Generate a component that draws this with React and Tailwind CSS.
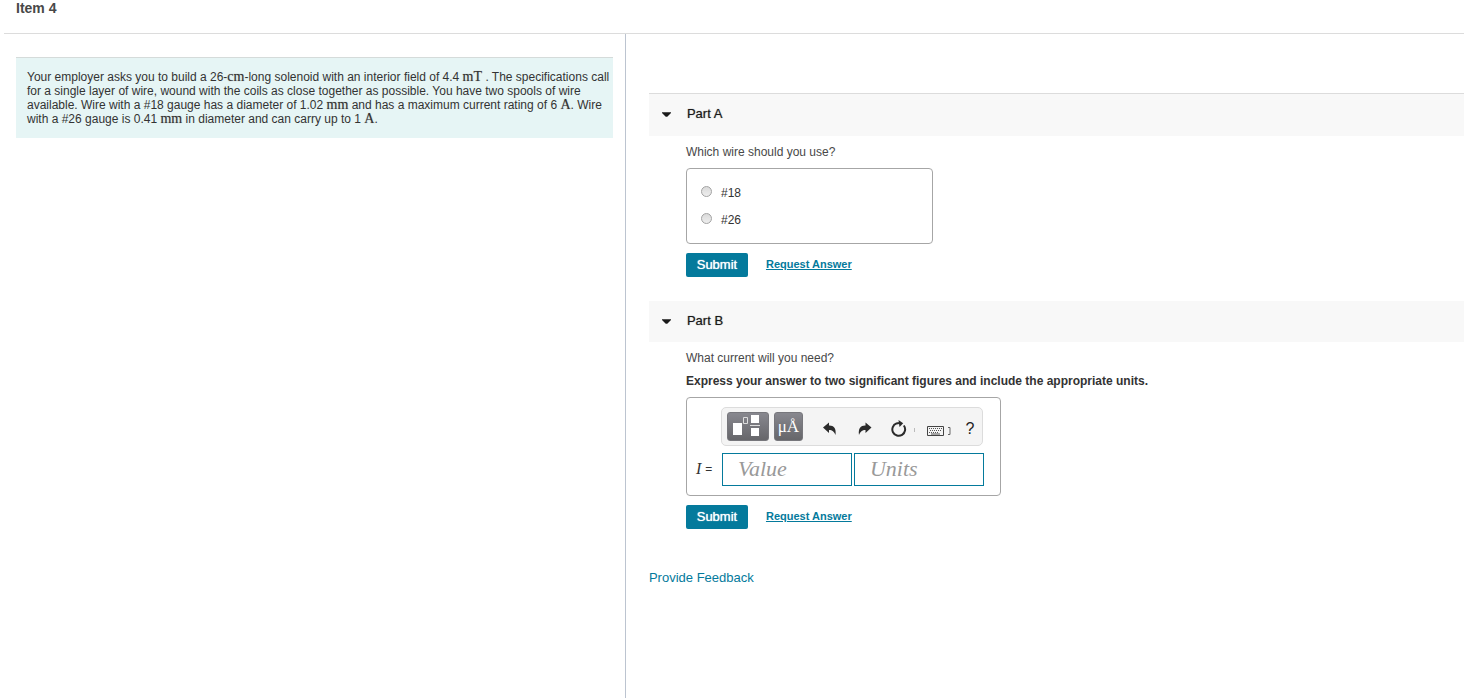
const SERIF = 'font-["Liberation_Serif","Times_New_Roman",serif]';

function Unit({ children }) {
  return <span className={`${SERIF} text-[14px] leading-[0] [text-shadow:0_0_1px_#999]`}>{children}</span>;
}

function Part({ title, bordered, children }) {
  return (
    <section>
      <h2 className={`bg-[#f8f8f8] ${bordered ? "border-t border-[#dcdcdc] pb-px" : ""}`}>
        <button
          type="button"
          aria-expanded="true"
          className="flex h-[41px] w-full items-center pb-px pl-[13px] text-left text-[13px] leading-4 text-[#1a1a1a] [text-shadow:0_0_1px_#777]"
        >
          <svg className="mr-4 h-[5px] w-[9px]" viewBox="0 0 10 5" aria-hidden="true">
            <path d="M0 0h10v.8L5.8 5H4.2L0 .8z" fill="#1a1a1a" />
          </svg>
          {title}
        </button>
      </h2>
      <div className="pt-[9px] pl-[37px]">{children}</div>
    </section>
  );
}

function Actions() {
  return (
    <div className="flex items-center gap-[18px]">
      <button
        type="submit"
        className="h-6 w-[62px] rounded-[2px] bg-[#047a9c] text-[13px] leading-4 text-white [text-shadow:0_0_1px_#fff]"
      >
        Submit
      </button>
      <a href="#answer" className="pb-[2px] text-[11px] leading-4 font-bold text-[#047a9c] underline">
        Request Answer
      </a>
    </div>
  );
}

function Choice({ value }) {
  return (
    <label className="flex h-[27px] items-center gap-[9px]">
      <input
        type="radio"
        name="wire"
        value={value}
        className="mb-[2px] h-[11px] w-[11px] appearance-none rounded-full border border-[#a2a2a2] bg-linear-to-b from-[#dadada] to-[#eeeeee] checked:bg-[#555]"
      />
      {value}
    </label>
  );
}

function ToolButton({ label, className = "", children }) {
  return (
    <button type="button" aria-label={label} className={`flex items-center justify-center ${className}`}>
      {children}
    </button>
  );
}

const RAISED =
  "h-[29px] rounded-[3px] border border-[#77777c] bg-linear-to-b from-[#88888f] to-[#66666a]";

function Toolbar() {
  return (
    <div className="ml-[25px] flex h-[39px] w-[262px] items-center rounded-[5px] border border-[#dcdcdc] bg-[#f4f4f4] pl-[5px]">
      <ToolButton label="Templates" className={`w-[42px] ${RAISED}`}>
        <svg width="40" height="27" viewBox="0 0 40 27">
          <path d="M5 10h9v12H5zM23 2h8v8h-8zM23 15h8v8h-8z" fill="#fff" />
          <path d="M22 12.5h10" stroke="#ddd" />
          <path d="M15.5 4.500h4v6h-4z" fill="none" stroke="#ddd" />
        </svg>
      </ToolButton>
      <ToolButton
        label="Symbols"
        className={`ml-[5px] w-[29px] pt-px ${SERIF} text-[17px] leading-4 text-white ${RAISED}`}
      >
        μÅ
      </ToolButton>
      <div className="flex items-center pt-[5px]">
        <ToolButton label="Undo" className="ml-5 h-6 w-[14px]">
          <svg width="14" height="16" viewBox="0 0 14 16">
            <path
              d="M0 6.500 6 1.500V4.500C10.500 4.300 13.500 7 12.500 14 11 10.500 9.500 9 6 9V12z"
              fill="#2b2b2b"
            />
          </svg>
        </ToolButton>
        <ToolButton label="Redo" className="ml-[21px] h-6 w-[14px]">
          <svg width="14" height="16" viewBox="0 0 14 16">
            <path
              d="M13.500 6.500 7.500 1.500V4.500C3 4.300 0 7 1 14 2.500 10.500 4 9 7.500 9V12z"
              fill="#2b2b2b"
            />
          </svg>
        </ToolButton>
        <ToolButton label="Reset" className="ml-[19px] h-6 w-6">
          <svg width="24" height="18" viewBox="0 0 24 18">
            <path d="M12.800 5.500A6.400 6.400 0 1 1 5.500 3.400L8 3" fill="none" stroke="#2b2b2b" strokeWidth="2" />
            <path d="M7.500 0 12.200 3.200 8.500 7z" fill="#2b2b2b" />
            <path d="M23.500 8v4" stroke="#bbb" />
          </svg>
        </ToolButton>
        <ToolButton label="Keyboard shortcuts" className="ml-3 h-6 w-6 pt-[5px]">
          <svg width="24" height="11" viewBox="0 0 24 11">
            <path d="M.5.5h16v9H.5z" fill="#f4f4f4" stroke="#444" />
            <path d="M2 2.500h13M3 4.500h12M2 6.500h10" stroke="#555" strokeDasharray="1 1" />
            <path d="M4 8h9" stroke="#555" />
            <path d="M21 1.500h2v7H21" fill="none" stroke="#666" />
          </svg>
        </ToolButton>
        <ToolButton label="Help" className="ml-[14px] h-6 w-[10px] text-[16px] leading-4 text-[#222]">
          ?
        </ToolButton>
      </div>
    </div>
  );
}

function Field({ name }) {
  return (
    <input
      type="text"
      aria-label={name}
      placeholder={name}
      className={`h-[33px] w-[130px] border border-[#047a9c] bg-white pb-[2px] pl-[15px] ${SERIF} text-[22px] text-[#222] italic placeholder:text-[#999]`}
    />
  );
}

export default function App() {
  return (
    <div className='flex min-h-screen flex-col bg-white pl-1 font-["Liberation_Sans",Arial,sans-serif] text-[12px] leading-[14px] text-[#333]'>
      <header className="h-[34px] border-b border-[#dcdcdc] pl-3">
        <h1 className="text-[14px] leading-4 font-bold text-[#484848]">Item 4</h1>
      </header>
      <div className="flex grow">
        <aside className="w-[42.6%] shrink-0 border-r border-[#bcc4d0] pt-[23px] pr-3 pl-3">
          <p className="border-t border-[#d5dbda] bg-[#e6f5f5] py-3 pl-[11px]">
            Your employer asks you to build a 26-<Unit>cm</Unit>-long solenoid with an interior field of
            4.4 <Unit>mT</Unit> . The specifications call for a single layer of wire, wound with the coils
            as close together as possible. You have two spools of wire available. Wire with a #18 gauge has
            a diameter of 1.02 <Unit>mm</Unit> and has a maximum current rating of 6 <Unit>A</Unit>. Wire
            with a #26 gauge is 0.41 <Unit>mm</Unit> in diameter and can carry up to 1 <Unit>A</Unit>.
          </p>
        </aside>
        <main className="flex grow flex-col gap-6 pt-[59px] pl-[23px]">
          <Part title="Part A" bordered>
            <form className="flex flex-col gap-[9px]" onSubmit={(e) => e.preventDefault()}>
              <p className="text-[#484848]">Which wire should you use?</p>
              <fieldset className="h-[76px] w-[247px] rounded-[4px] border border-[#a6a6a6] pt-[10px] pl-[14px]">
                <Choice value="#18" />
                <Choice value="#26" />
              </fieldset>
              <Actions />
            </form>
          </Part>
          <Part title="Part B">
            <form className="flex flex-col gap-[9px]" onSubmit={(e) => e.preventDefault()}>
              <p className="text-[#484848]">What current will you need?</p>
              <p className="font-bold">
                Express your answer to two significant figures and include the appropriate units.
              </p>
              <div className="flex h-[99px] w-[315px] flex-col gap-[7px] rounded-[4px] border border-[#a6a6a6] pt-[9px] pl-[9px]">
                <Toolbar />
                <div className="flex items-center gap-[2px]">
                  <span className="flex w-6 items-center gap-1 pb-[2px]">
                    <i className={`${SERIF} text-[16px]`}>I</i>
                    <span>=</span>
                  </span>
                  <Field name="Value" />
                  <Field name="Units" />
                </div>
              </div>
              <Actions />
            </form>
          </Part>
          <a href="#feedback" className="mt-[17px] self-start text-[13px] leading-4 text-[#047a9c]">
            Provide Feedback
          </a>
        </main>
      </div>
    </div>
  );
}
